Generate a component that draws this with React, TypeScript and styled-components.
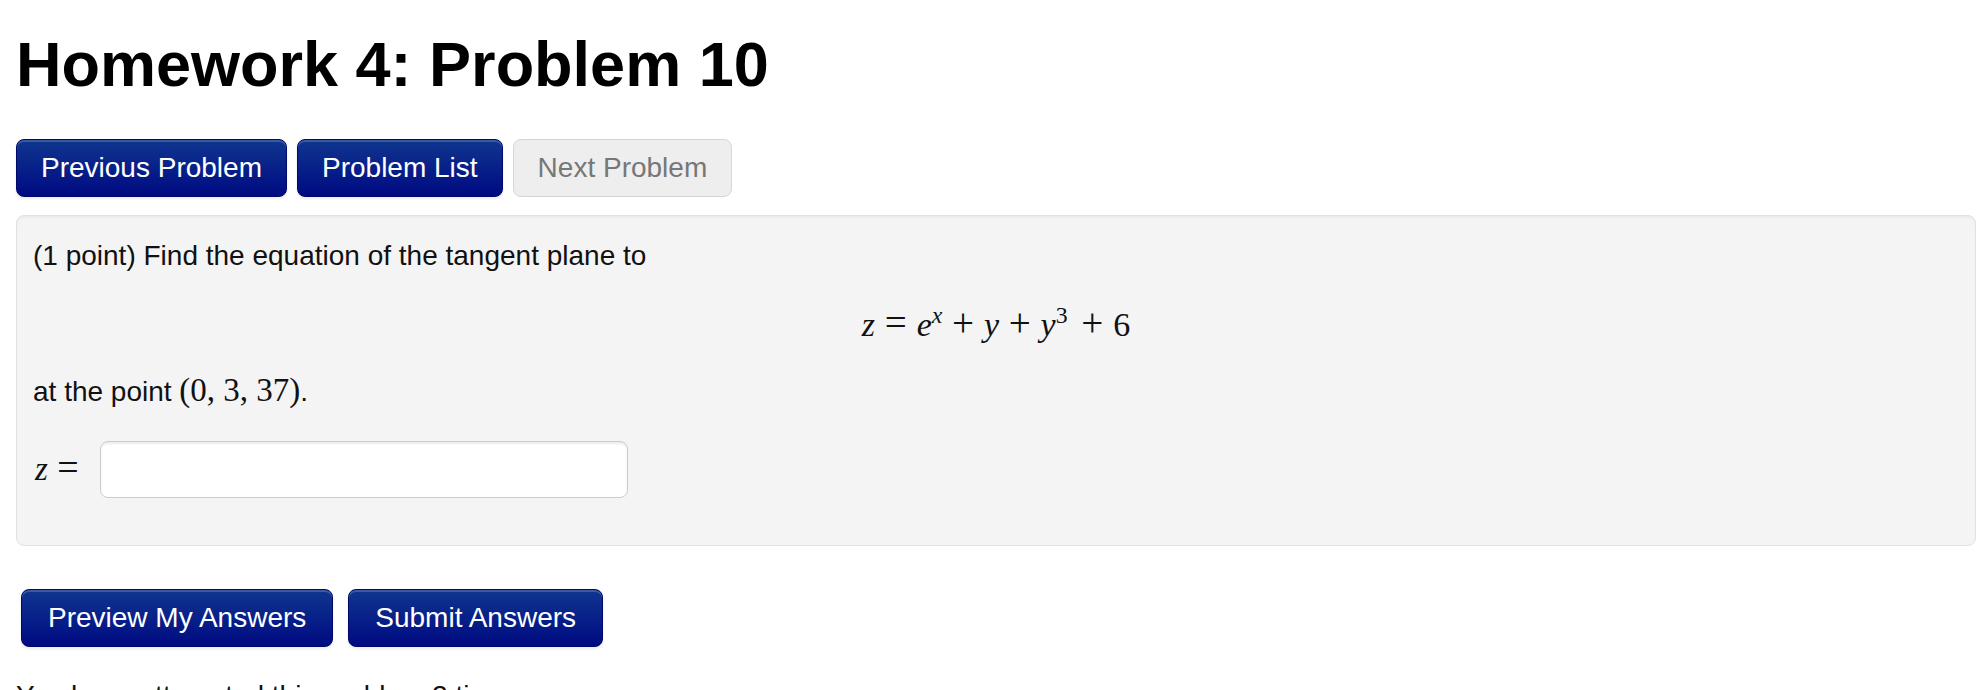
import React from 'react';
import styled, { createGlobalStyle } from 'styled-components';

const GlobalStyle = createGlobalStyle`
  html, body {
    margin: 0;
    padding: 0;
    background: #ffffff;
  }
  body {
    font-family: "Liberation Sans", Arial, Helvetica, sans-serif;
    font-size: 28px;
    line-height: 40px;
    color: #111111;
  }
`

const Page = styled.div`
  padding: 30px 6px 0 16px;
`

const Title = styled.h1`
  margin: 0 0 40px 0;
  font-size: 63px;
  line-height: 69px;
  font-weight: bold;
  color: #000000;
`

const ButtonRow = styled.div<{ $gap: number; $indent?: number }>`
  display: flex;
  gap: ${p => p.$gap}px;
  margin-left: ${p => p.$indent || 0}px;
`

const Button = styled.button<{ $pad: number; $disabled?: boolean }>`
  font-family: "Liberation Sans", Arial, Helvetica, sans-serif;
  font-size: 28px;
  line-height: 40px;
  padding: 8px ${p => p.$pad}px;
  border-radius: 8px;
  cursor: ${p => (p.$disabled ? 'default' : 'pointer')};
  color: ${p => (p.$disabled ? '#777777' : '#ffffff')};
  border: 1px solid ${p => (p.$disabled ? '#d6d6d6' : '#00086a')};
  background: ${p =>
    p.$disabled ? '#eeeeee' : 'linear-gradient(to bottom, #0f368f, #000a82)'};
  box-shadow: ${p =>
    p.$disabled
      ? 'none'
      : 'inset 0 2px 0 rgba(255,255,255,0.18), 0 2px 3px rgba(0,0,0,0.08)'};
  white-space: nowrap;
`

const Well = styled.div`
  margin-top: 18px;
  padding: 20px 16px 47px 16px;
  background: #f4f4f4;
  border: 1px solid #e2e2e2;
  border-radius: 8px;
  box-shadow: inset 0 2px 2px rgba(0, 0, 0, 0.04);
`

const Para = styled.div<{ $top?: number }>`
  margin-top: ${p => p.$top || 0}px;
`

const Display = styled.div`
  margin-top: 29px;
  text-align: center;
  font-family: "Liberation Serif", "Times New Roman", serif;
  font-size: 34px;
  line-height: 40px;
  color: #111111;
`

const MathSpan = styled.span`
  font-family: "Liberation Serif", "Times New Roman", serif;
  font-size: 33px;
  line-height: 1;
`

const Mi = styled.span`
  font-style: italic;
`

// operators are drawn a little larger, as the math font does
const Mo = styled.span<{ $extra?: number }>`
  font-size: 1.15em;
  line-height: 0;
  padding: 0 0.25em;
  margin-left: ${p => p.$extra || 0}px;
`

const Sup = styled.span`
  font-size: 0.7em;
  vertical-align: 0.55em;
  line-height: 0;
`

const AnswerRow = styled.div`
  display: flex;
  align-items: center;
  gap: 12px;
  margin-top: 29px;
  padding-left: 2px;
`

const AnswerInput = styled.input`
  width: 528px;
  height: 57px;
  box-sizing: border-box;
  border: 1px solid #cccccc;
  border-radius: 8px;
  background: #ffffff;
  box-shadow: inset 0 2px 2px rgba(0, 0, 0, 0.075);
  font-family: "Liberation Sans", Arial, sans-serif;
  font-size: 28px;
  padding: 0 12px;
  outline: none;
`

const Footer = styled.div`
  margin-top: 43px;
`

const Attempts = styled.p`
  margin: 29px 0 0 0;
`

function App() {
  return (
    <>
      <GlobalStyle />
      <Page>
        <Title>Homework 4: Problem 10</Title>
        <ButtonRow $gap={10}>
          <Button $pad={24}>Previous Problem</Button>
          <Button $pad={24}>Problem List</Button>
          <Button $pad={24} $disabled disabled>Next Problem</Button>
        </ButtonRow>

        <Well>
          <Para>(1 point) Find the equation of the tangent plane to</Para>
          <Display>
            <Mi>z</Mi>
            <Mo>=</Mo>
            <Mi>e</Mi>
            <Sup><Mi>x</Mi></Sup>
            <Mo>+</Mo>
            <Mi>y</Mi>
            <Mo>+</Mo>
            <Mi>y</Mi>
            <Sup>3</Sup>
            <Mo $extra={4}>+</Mo>
            <span>6</span>
          </Display>
          <Para $top={27}>
            at the point <MathSpan>(0, 3, 37)</MathSpan>.
          </Para>
          <AnswerRow>
            <MathSpan>
              <Mi>z</Mi>
              <Mo>=</Mo>
            </MathSpan>
            <AnswerInput type="text" aria-label="answer" />
          </AnswerRow>
        </Well>

        <Footer>
          <ButtonRow $gap={15} $indent={5}>
            <Button $pad={26}>Preview My Answers</Button>
            <Button $pad={26}>Submit Answers</Button>
          </ButtonRow>
          <Attempts>You have attempted this problem 2 times.</Attempts>
        </Footer>
      </Page>
    </>
  );
}

export default App;
